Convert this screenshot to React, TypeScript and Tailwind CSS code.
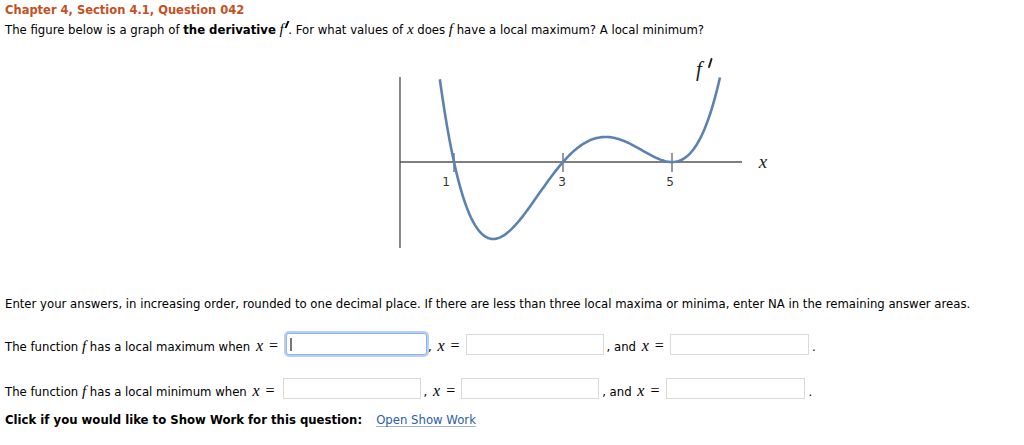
import React from "react";

const serif = { fontFamily: '"Liberation Serif", "DejaVu Serif", serif' };

function Prime() {
  return <span className="inline-block relative bottom-[6px] ml-[2px] mr-[1px] w-[1.6px] h-[7px] bg-black skew-x-[-22deg]" />;
}

function Graph() {
  // f'(t) = k (t-1)(t-3)(t-5)^2, mapped to pixels
  const pts: string[] = [];
  for (let i = 0; i <= 200; i++) {
    const t = 0.74 + (5.88 - 0.74) * (i / 200);
    const v = (t - 1) * (t - 3) * (t - 5) * (t - 5);
    const x = 64 + (t - 1) * 54.5;
    const y = 112 - 7.76 * v;
    pts.push(`${x.toFixed(2)},${y.toFixed(2)}`);
  }
  return (
    <svg width="410" height="215" className="block ml-[385px] mt-[12px]">
      <line x1="10" y1="27" x2="10" y2="198" stroke="#555" strokeWidth="1.4" />
      <line x1="10" y1="112" x2="352" y2="112" stroke="#555" strokeWidth="1.4" />
      {[64, 173, 282].map((x) => (
        <line key={x} x1={x} y1="103" x2={x} y2="122" stroke="#555" strokeWidth="1.2" />
      ))}
      <polyline points={pts.join(" ")} fill="none" stroke="#5b82b0" strokeWidth="2.6" strokeLinejoin="round" />
      <text x="56" y="136" fontSize="12" fill="#333" textAnchor="middle" fontFamily="DejaVu Sans, sans-serif">1</text>
      <text x="172" y="136" fontSize="12" fill="#333" textAnchor="middle" fontFamily="DejaVu Sans, sans-serif">3</text>
      <text x="280" y="136" fontSize="12" fill="#333" textAnchor="middle" fontFamily="DejaVu Sans, sans-serif">5</text>
      <text x="373" y="118" fontSize="19" fill="#222" textAnchor="middle" fontStyle="italic" fontFamily="Liberation Serif, serif">x</text>
      <text x="306" y="26" fontSize="21" fill="#222" fontStyle="italic" fontFamily="Liberation Serif, serif">f</text>
      <line x1="321.5" y1="9" x2="319" y2="17" stroke="#222" strokeWidth="2" strokeLinecap="round" />
    </svg>
  );
}

function X() {
  return (
    <span style={serif} className="text-[16px] leading-[10px]">
      <i className="ml-[2px]">x</i>
      <span className="ml-[6px]">=</span>
    </span>
  );
}

function Box({ w, focused }: { w: string; focused?: boolean }) {
  if (focused) {
    return (
      <div className={`relative ${w} h-[22px] border border-[#8fb4ea] rounded-[3px] ring-[2px] ring-[#b7d0f4] bg-white shrink-0`}>
        <div className="absolute left-[3px] top-[4px] w-[1.5px] h-[13px] bg-[#777]" />
      </div>
    );
  }
  return <div className={`${w} h-[21px] border border-[#d9d9d9] bg-white shrink-0`} />;
}

function Txt({ children, className = "" }: { children: React.ReactNode; className?: string }) {
  return <span className={`pt-[7px] whitespace-nowrap ${className}`}>{children}</span>;
}

function F({ children }: { children: React.ReactNode }) {
  return (
    <i style={serif} className="text-[15px] leading-[10px]">
      {children}
    </i>
  );
}

export default function App() {
  return (
    <div
      className="px-[5px] text-[11.7px] leading-[15px] text-black bg-white min-h-[445px]"
      style={{ fontFamily: '"DejaVu Sans", Verdana, sans-serif' }}
    >
      <h1 className="pt-[3px] font-bold text-[#c4501f] text-[11.5px]">Chapter 4, Section 4.1, Question 042</h1>
      <p className="mt-[5px]">
        The figure below is a graph of <b>the derivative</b>{" "}
        <F>
          f<Prime />
        </F>
        . For what values of <F>x</F> does <F>f</F> have a local maximum? A local minimum?
      </p>

      <Graph />

      <p className="mt-[32px]">
        Enter your answers, in increasing order, rounded to one decimal place. If there are less than three local maxima or
        minima, enter NA in the remaining answer areas.
      </p>

      <div className="mt-[21px] flex items-center h-[22px]">
        <Txt>
          The function <F>f</F> has a local maximum when <X />
        </Txt>
        <div className="ml-[8px]">
          <Box w="w-[141px]" focused />
        </div>
        <Txt className="ml-[1px]">
          , <X />
        </Txt>
        <div className="ml-[6px]">
          <Box w="w-[138px]" />
        </div>
        <Txt className="ml-[3px]">
          , and <X />
        </Txt>
        <div className="ml-[6px]">
          <Box w="w-[139px]" />
        </div>
        <Txt className="ml-[3px]">.</Txt>
      </div>

      <div className="mt-[23px] flex items-center h-[21px]">
        <Txt>
          The function <F>f</F> has a local minimum when <X />
        </Txt>
        <div className="ml-[8px]">
          <Box w="w-[138px]" />
        </div>
        <Txt className="ml-[3px]">
          , <X />
        </Txt>
        <div className="ml-[6px]">
          <Box w="w-[138px]" />
        </div>
        <Txt className="ml-[3px]">
          , and <X />
        </Txt>
        <div className="ml-[7px]">
          <Box w="w-[139px]" />
        </div>
        <Txt className="ml-[3px]">.</Txt>
      </div>

      <p className="mt-[14px]">
        <b>Click if you would like to Show Work for this question:</b>
        <a href="#" className="ml-[14px] text-[#2b5ea6] underline decoration-[#9db4d6] underline-offset-2">
          Open Show Work
        </a>
      </p>
    </div>
  );
}
